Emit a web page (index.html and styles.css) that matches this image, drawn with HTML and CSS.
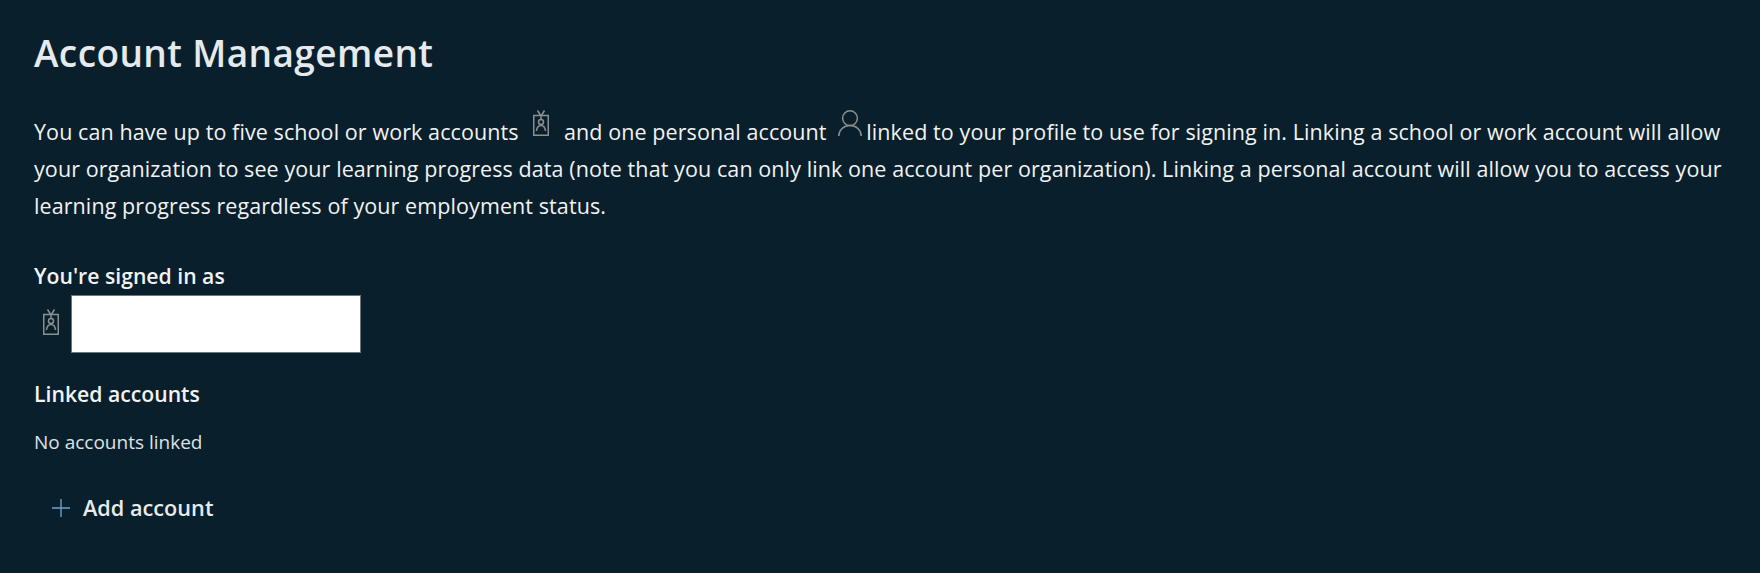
FILE: index.html
```html
<!DOCTYPE html>
<html lang="en">
<head>
  <meta charset="UTF-8" />
  <meta name="viewport" content="width=device-width, initial-scale=1.0"/>
  <title>Account Management</title>
  <link rel="stylesheet" href="styles.css">
</head>
<body>

  <main class="page">
    <h1>Account Management</h1>

    <p class="intro">
      You can have up to five school or work accounts
      <svg class="icon-badge" viewBox="0 0 16 26" aria-hidden="true"><path d="M4.500.5L8 6l3.500-5.500M8 6v3M.75 5.500h14.500v19.750H.75z"/><circle cx="8" cy="12" r="2.500"/><path d="M3.500 21c.3-3 2-5.500 4.500-5.500s4.200 2.500 4.500 5.500"/></svg>
      and one personal account
      <svg class="icon-person" viewBox="0 0 24 26" aria-hidden="true"><circle cx="12" cy="8.200" r="7.400"/><path d="M.8 26c0-6 5-10.500 11.200-10.500S23.200 20 23.200 26"/></svg>linked to your profile to use for signing in. Linking a school or work account will allow<br>
      your organization to see your learning progress data (note that you can only link one account per organization). Linking a personal account will allow you to access your<br>
      learning progress regardless of your employment status.
    </p>

    <h2 class="signed-title">You're signed in as</h2>
    <div class="signed-row">
      <svg class="icon-badge" viewBox="0 0 16 26" aria-hidden="true"><path d="M4.500.5L8 6l3.500-5.500M8 6v3M.75 5.500h14.500v19.750H.75z"/><circle cx="8" cy="12" r="2.500"/><path d="M3.500 21c.3-3 2-5.500 4.500-5.500s4.200 2.500 4.500 5.500"/></svg>
      <div class="account-box"></div>
    </div>

    <h2 class="linked-title">Linked accounts</h2>
    <p class="no-accounts">No accounts linked</p>

    <button class="add-account">
      <svg class="icon-plus" viewBox="0 0 20 20" aria-hidden="true"><path d="M10 0v20M0 10h20"/></svg>
      Add account
    </button>
  </main>

</body>
</html>
```

FILE: styles.css
```css
body {
  font-family: "Open Sans", "Noto Sans", sans-serif;
  background: #091f2c;
  color: #f2f2f2;
  margin: 0;
  padding: 0;
}

.page {
  padding: 28px 34px 0;
}

h1 {
  font-size: 37px;
  line-height: 50px;
  font-weight: 600;
  letter-spacing: 0.4px;
  margin: 0 0 32px;
  color: #e6eaec;
}

.intro {
  font-size: 21.5px;
  line-height: 37px;
  letter-spacing: 0.09px;
  margin: 0 0 38px;
  white-space: nowrap;
}

.icon-badge,
.icon-person {
  fill: none;
  stroke: #8b8f92;
  stroke-width: 1.5;
  vertical-align: 4px;
}

.icon-badge {
  width: 16px;
  height: 26px;
  margin: 0 9px;
}

.icon-person {
  width: 24px;
  height: 26px;
  margin: 0 4px 0 6px;
}

h2 {
  font-size: 21.2px;
  font-weight: 600;
  line-height: 28px;
  margin: 0;
}

.signed-row {
  display: flex;
  align-items: center;
  height: 58px;
  margin-top: 5px;
  padding-left: 9px;
  gap: 12px;
}

.signed-row .icon-badge {
  margin: 0 0 4px;
}

.account-box {
  width: 288px;
  height: 56px;
  background: #fff;
  border: 1px solid #6b757b;
}

.linked-title {
  margin-top: 27px;
}

.no-accounts {
  font-size: 19px;
  line-height: 26px;
  margin: 21px 0 0;
  color: #dfe2e4;
}

.add-account {
  display: flex;
  align-items: center;
  gap: 13px;
  margin-top: 38px;
  padding: 0 0 0 18px;
  background: none;
  border: none;
  color: #e8eaeb;
  font-family: inherit;
  font-size: 21.7px;
  font-weight: 600;
  line-height: 30px;
}

.icon-plus {
  width: 18px;
  height: 18px;
  fill: none;
  stroke: #6fa3cc;
  stroke-width: 1.5;
}
```
